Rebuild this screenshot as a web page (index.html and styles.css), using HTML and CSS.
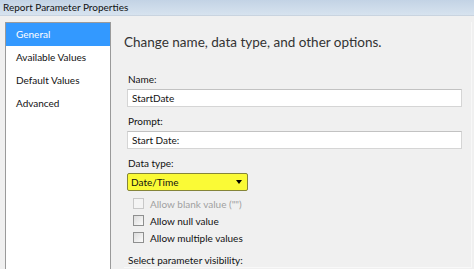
FILE: index.html
```html
<!DOCTYPE html>
<html lang="en">
<head>
  <meta charset="UTF-8" />
  <title>Report Parameter Properties</title>
  <link rel="stylesheet" href="styles.css">
</head>
<body>
  <div class="window">
    <div class="titlebar">Report Parameter Properties</div>

    <div class="dialog-body">
      <nav class="nav">
        <div class="nav-item active">General</div>
        <div class="nav-item">Available Values</div>
        <div class="nav-item">Default Values</div>
        <div class="nav-item">Advanced</div>
      </nav>

      <main class="content">
        <h1>Change name, data type, and other options.</h1>

        <div class="field">
          <label>Name:</label>
          <div class="textbox">StartDate</div>
        </div>

        <div class="field">
          <label>Prompt:</label>
          <div class="textbox">Start Date:</div>
        </div>

        <div class="field">
          <label>Data type:</label>
          <div class="dropdown">
            <span>Date/Time</span>
            <span class="arrow"></span>
          </div>
        </div>

        <div class="checks">
          <div class="check disabled"><span class="box"></span>Allow blank value ("")</div>
          <div class="check"><span class="box"></span>Allow null value</div>
          <div class="check"><span class="box"></span>Allow multiple values</div>
        </div>

        <div class="field">
          <label>Select parameter visibility:</label>
        </div>
      </main>
    </div>
  </div>
</body>
</html>
```

FILE: styles.css
```css
:root {
  --window-bg: #f0f0f0;
  --title-top: #c3d3e5;
  --title-bottom: #d7e3ef;
  --list-border: #9a9a9a;
  --select-blue: #3399ff;
  --text: #111;
  --input-border: #d5d5d5;
  --highlight: #fafa36;
}

*, *::before, *::after {
  box-sizing: border-box;
}

body {
  margin: 0;
  font-family: 'Lato', 'Noto Sans', sans-serif;
  font-size: 10px;
  color: var(--text);
  background-color: var(--window-bg);
  overflow: hidden;
}

.window {
  width: 474px;
  height: 269px;
  display: flex;
  flex-direction: column;
  overflow: hidden;
}

.titlebar {
  height: 16px;
  padding-left: 3px;
  line-height: 15px;
  font-size: 10px;
  background: linear-gradient(to bottom, var(--title-top), var(--title-bottom));
  border-bottom: 1px solid #c9d4e0;
}

.dialog-body {
  flex: 1;
  display: flex;
  padding: 6px 2px 0 5px;
  gap: 13px;
  min-height: 0;
}

.nav {
  width: 106px;
  background-color: #fff;
  border: 1px solid var(--list-border);
  border-bottom: none;
}

.nav-item {
  height: 23px;
  line-height: 23px;
  padding-left: 10px;
}

.nav-item.active {
  background-color: var(--select-blue);
  color: #fff;
}

.content {
  flex: 1;
  padding-top: 10px;
  margin-bottom: 1px;
  border-right: 1px solid #f8f8f8;
  border-bottom: 1px solid #f8f8f8;
}

h1 {
  margin: 0 0 20px 0;
  font-size: 13.5px;
  font-weight: normal;
  color: #333;
  line-height: 20px;
}

.field {
  padding-left: 3px;
  margin-bottom: 7px;
}

label {
  display: block;
  padding-left: 1px;
  line-height: 14px;
  margin-bottom: 3px;
}

.textbox {
  width: 335px;
  height: 18px;
  line-height: 16px;
  padding-left: 4px;
  background-color: #fff;
  border: 1px solid var(--input-border);
  border-top-color: #c2c2c2;
}

.dropdown {
  width: 121px;
  height: 18px;
  display: flex;
  align-items: center;
  justify-content: space-between;
  padding: 0 5px 0 3px;
  background-color: var(--highlight);
  border: 1px solid #85853a;
  border-radius: 2px;
}

.arrow {
  width: 0;
  height: 0;
  border-left: 3px solid transparent;
  border-right: 3px solid transparent;
  border-top: 4px solid #000;
}

.checks {
  display: flex;
  flex-direction: column;
  gap: 6px;
  padding-left: 9px;
  margin-top: 6px;
  margin-bottom: 10px;
}

.check {
  display: flex;
  align-items: center;
  gap: 6px;
  height: 11px;
}

.box {
  width: 11px;
  height: 11px;
  border: 1px solid #8e8f8f;
  background: linear-gradient(135deg, #dcdcdc, #fbfbfb);
}

.check.disabled {
  color: #a0a0a0;
}

.check.disabled .box {
  border-color: #c8c8c8;
  background: #f4f4f4;
}
```
